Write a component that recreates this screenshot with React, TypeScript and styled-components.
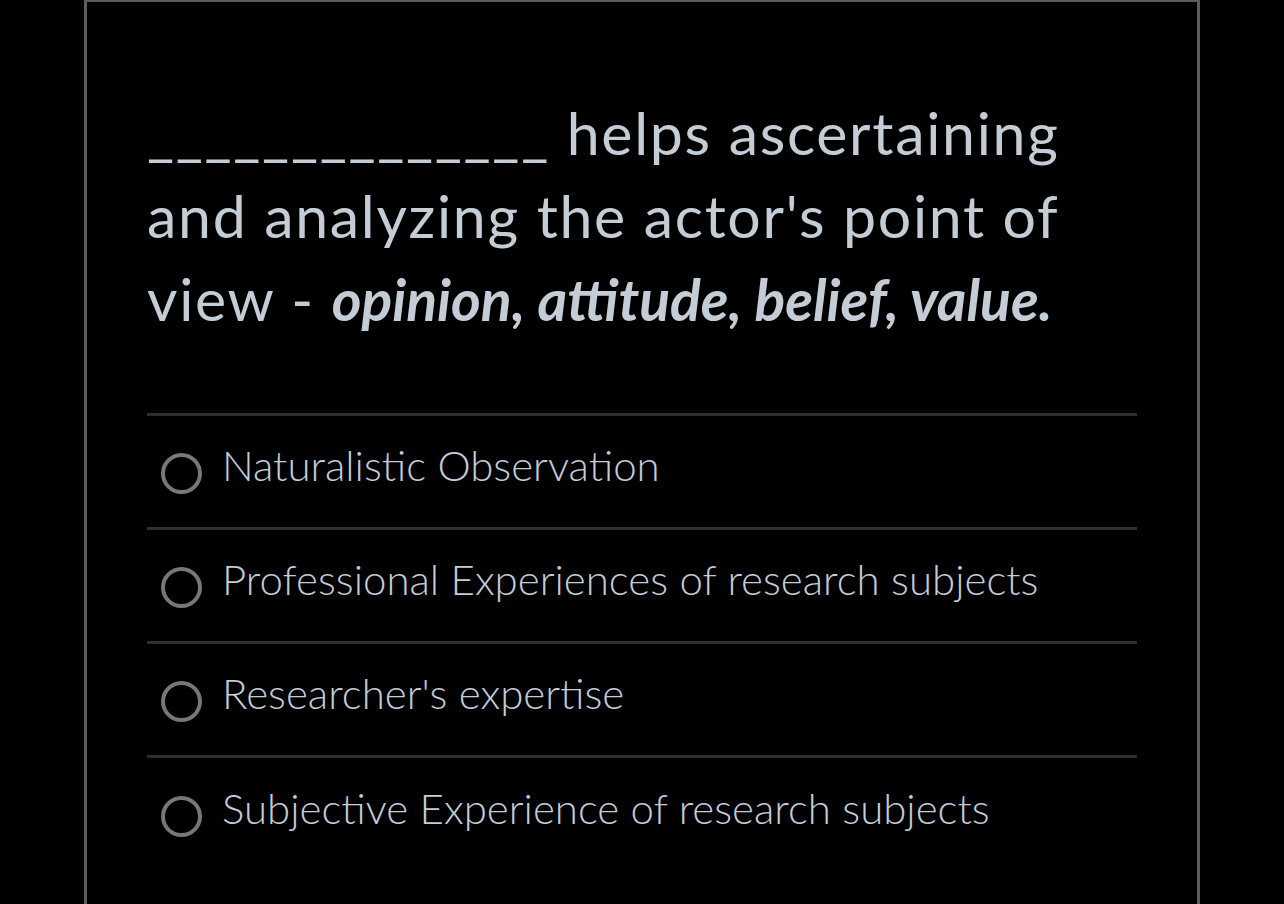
import React from 'react';
import styled, { createGlobalStyle } from 'styled-components';

const GlobalStyle = createGlobalStyle`
  html, body {
    margin: 0;
    padding: 0;
    background: #000;
  }
  body {
    font-family: Lato, "Noto Sans", sans-serif;
  }
`;

const Panel = styled.div`
  box-sizing: border-box;
  width: 1116px;
  min-height: 904px;
  margin: 0 0 0 84px;
  border: 3px solid #5c5c5c;
  border-bottom: none;
  border-top-width: 2px;
  padding: 89px 60px 0 60px;
  background: #000;
`;

const Question = styled.div`
  font-size: 59px;
  line-height: 83px;
  color: #c4ccd6;
  letter-spacing: 1.7px;
  padding-bottom: 73px;
  border-bottom: 3px solid #2e2e2e;

  b {
    font-size: 57px;
    line-height: 80px;
    font-weight: 700;
    font-style: italic;
    letter-spacing: 0;
  }
`;

const Option = styled.label`
  box-sizing: border-box;
  display: flex;
  align-items: center;
  height: 114px;
  padding: 0 0 14px 14px;
  border-bottom: 3px solid #2e2e2e;
  cursor: pointer;

  &:last-child {
    border-bottom: none;
  }
`;

const Radio = styled.span`
  box-sizing: border-box;
  width: 41px;
  height: 41px;
  border-radius: 50%;
  border: 4px solid #77777b;
  margin: 17px 20px 0 0;
  flex-shrink: 0;
`;

const OptionText = styled.span`
  font-size: 42px;
  font-weight: 300;
  color: #c4ccd6;
`;

const options = [
  'Naturalistic Observation',
  'Professional Experiences of research subjects',
  "Researcher's expertise",
  'Subjective Experience of research subjects',
];

export default function App() {
  return (
    <>
      <GlobalStyle />
      <Panel>
        <Question>
          ______________ helps ascertaining and analyzing the actor's point of view -{' '}
          <b>opinion, attitude, belief, value.</b>
        </Question>
        {options.map((o) => (
          <Option key={o}>
            <Radio />
            <OptionText>{o}</OptionText>
          </Option>
        ))}
      </Panel>
    </>
  );
}
